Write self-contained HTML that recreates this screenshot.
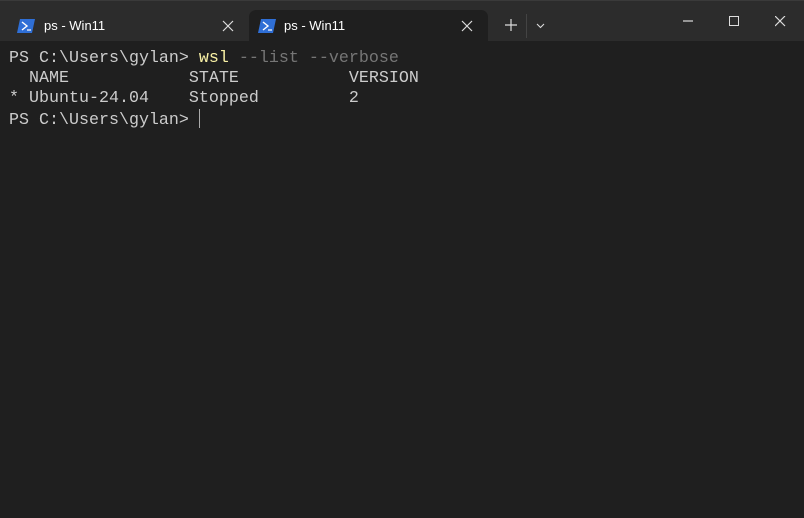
<!DOCTYPE html>
<html><head><style>
html,body{margin:0;padding:0;width:804px;height:518px;overflow:hidden;background:#1f1f1f;}
.bar{position:absolute;left:0;top:0;width:804px;height:41px;background:#2c2c2c;border-top:1px solid #3a3a3a;box-sizing:border-box;}
.tab{position:absolute;top:9px;height:32px;font:13px "Liberation Sans",sans-serif;color:#fff;}
.tab .t{position:absolute;left:44px;top:8px;}
.act{left:249px;width:239px;background:#1f1f1f;border-radius:7px 7px 0 0;}
.ico{position:absolute;left:17px;top:9px;}
.term{position:absolute;left:9px;top:49px;font:16.67px/20px "Liberation Mono",monospace;color:#cccccc;white-space:pre;}
.y{color:#f9f1a5}.g{color:#767676}
.cur{display:inline-block;width:1px;height:19px;background:#aaa;vertical-align:-4px}
</style></head><body>
<div class="bar">
<div class="tab" style="left:0;width:249px"><svg class="ico" width="18" height="14" viewBox="0 0 18 14"><path d="M3 0h15l-3 14H0z" fill="#2f6fd6"/><path d="M5 3l5 4-5 4" stroke="#fff" stroke-width="1.4" fill="none"/><path d="M10 11h4" stroke="#fff" stroke-width="1.2"/></svg><span class="t">ps - Win11</span>
<svg style="position:absolute;left:222px;top:10px" width="12" height="12"><path d="M1 1l10 10M11 1L1 11" stroke="#ddd" stroke-width="1.2"/></svg></div>
<div class="tab act"><svg class="ico" style="left:9px" width="18" height="14" viewBox="0 0 18 14"><path d="M3 0h15l-3 14H0z" fill="#2f6fd6"/><path d="M5 3l5 4-5 4" stroke="#fff" stroke-width="1.4" fill="none"/><path d="M10 11h4" stroke="#fff" stroke-width="1.2"/></svg><span class="t" style="left:35px">ps - Win11</span>
<svg style="position:absolute;left:212px;top:10px" width="12" height="12"><path d="M1 1l10 10M11 1L1 11" stroke="#ddd" stroke-width="1.2"/></svg></div>
<svg style="position:absolute;left:505px;top:18px" width="12" height="12"><path d="M6 0v12M0 6h12" stroke="#ddd" stroke-width="1.2"/></svg>
<div style="position:absolute;left:526px;top:13px;width:1px;height:24px;background:#444"></div>
<svg style="position:absolute;left:536px;top:22px" width="9" height="6"><path d="M1 1l3.5 3.5L8 1" stroke="#ddd" stroke-width="1.1" fill="none"/></svg>
<svg style="position:absolute;left:683px;top:19px" width="12" height="2"><path d="M0 1h10" stroke="#ddd" stroke-width="1.2"/></svg>
<svg style="position:absolute;left:729px;top:15px" width="11" height="11"><rect x="0.5" y="0.5" width="9" height="9" stroke="#ddd" fill="none"/></svg>
<svg style="position:absolute;left:775px;top:15px" width="11" height="11"><path d="M0 0l10 10M10 0L0 10" stroke="#ddd" stroke-width="1.2"/></svg>
</div>
<div class="term">PS C:\Users\gylan&gt; <span class="y">wsl</span> <span class="g">--list --verbose</span>
  NAME            STATE           VERSION
* Ubuntu-24.04    Stopped         2
PS C:\Users\gylan&gt; <span class="cur"></span></div>
</body></html>
